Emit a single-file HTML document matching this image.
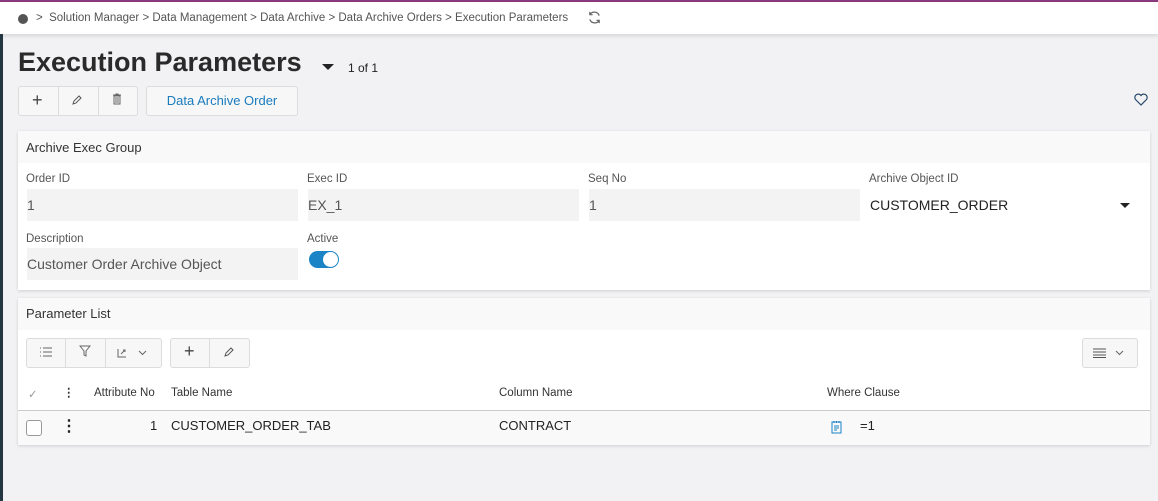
<!DOCTYPE html>
<html><head><meta charset="utf-8">
<style>
*{box-sizing:border-box;margin:0;padding:0}
body{width:1158px;height:501px;overflow:hidden;background:#f2f1f3;font-family:"Liberation Sans",sans-serif;color:#222;position:relative;font-size:12px}
.abs{position:absolute}
.topline{left:0;top:0;width:1158px;height:2px;background:#8a3a7e}
.crumb{left:0;top:2px;width:1158px;height:32px;background:#fff;box-shadow:0 2px 4px rgba(0,0,0,.12)}
.leftbar{left:0;top:34px;width:3px;height:467px;background:#243642}
.btn{background:#f7f7f7;border:1px solid #dcdcdc;border-radius:3px}
.card{background:#fff;box-shadow:0 1px 3px rgba(0,0,0,.15)}
.lbl{font-size:11.5px;color:#555}
.fld{background:#f3f3f3;font-size:14px;color:#555;padding:8px 0;height:32px}
.th{font-size:11.5px;color:#333}
</style></head><body>
<div class="abs topline"></div>
<div class="abs crumb">
 <div class="abs" style="left:18px;top:12px;width:10px;height:10px;border-radius:50%;background:#555"></div>
 <div class="abs" style="left:36px;top:10px;font-size:11.5px;color:#555">&gt;&nbsp; Solution Manager &gt; Data Management &gt; Data Archive &gt; Data Archive Orders &gt; Execution Parameters</div>
 <svg class="abs" style="left:587px;top:8px" width="15" height="15" viewBox="0 0 16 16" fill="none" stroke="#666" stroke-width="1.3"><path d="M13 6A5.5 5.5 0 0 0 3 5M3 2v3h3M3 10a5.5 5.5 0 0 0 10 1M13 14v-3h-3"/></svg>
</div>
<div class="abs leftbar"></div>
<div class="abs" style="left:18px;top:47px;font-size:27px;font-weight:bold;color:#2a2a2a">Execution Parameters</div>
<div class="abs" style="left:322px;top:64px;width:0;height:0;border-left:6px solid transparent;border-right:6px solid transparent;border-top:6px solid #222"></div>
<div class="abs" style="left:348px;top:61px;font-size:12px">1 of 1</div>
<div class="abs btn" style="left:18px;top:86px;width:120px;height:30px"></div>
<div class="abs" style="left:58px;top:87px;width:1px;height:28px;background:#dcdcdc"></div>
<div class="abs" style="left:98px;top:87px;width:1px;height:28px;background:#dcdcdc"></div>
<div class="abs" style="left:32px;top:90px;font-size:18px;color:#444">+</div>
<svg class="abs" style="left:71px;top:94px" width="12" height="12" viewBox="0 0 12 12"><path d="M2 10l1-3 5-5 2 2-5 5z" fill="none" stroke="#555"/></svg>
<svg class="abs" style="left:112px;top:93px" width="10" height="12" viewBox="0 0 10 12"><path d="M1 2h8M3.5 1h3M2 3h6v8H2zM4 4v6M6 4v6" fill="none" stroke="#666"/></svg>
<div class="abs btn" style="left:146px;top:86px;width:152px;height:30px;font-size:13px;color:#1a7bbd;text-align:center;line-height:28px">Data Archive Order</div>
<svg class="abs" style="left:1134px;top:93px" width="14" height="13" viewBox="0 0 14 13"><path d="M7 12L1.5 6.5A3 3 0 0 1 7 2.5 3 3 0 0 1 12.5 6.5z" fill="none" stroke="#2a4a6a" stroke-width="1.2"/></svg>

<div class="abs card" style="left:18px;top:131px;width:1132px;height:159px">
 <div style="height:32px;background:#f9f9f9;padding:9px 8px;font-size:13px;color:#333">Archive Exec Group</div>
 <div class="abs lbl" style="left:8px;top:42px">Order ID</div>
 <div class="abs fld" style="left:9px;top:58px;width:271px">1</div>
 <div class="abs lbl" style="left:289px;top:42px">Exec ID</div>
 <div class="abs fld" style="left:290px;top:58px;width:271px">EX_1</div>
 <div class="abs lbl" style="left:570px;top:42px">Seq No</div>
 <div class="abs fld" style="left:571px;top:58px;width:271px">1</div>
 <div class="abs lbl" style="left:851px;top:42px">Archive Object ID</div>
 <div class="abs" style="left:852px;top:66px;font-size:14px;color:#222">CUSTOMER_ORDER</div>
 <div class="abs" style="left:1102px;top:72px;width:0;height:0;border-left:5px solid transparent;border-right:5px solid transparent;border-top:5px solid #222"></div>
 <div class="abs lbl" style="left:8px;top:102px">Description</div>
 <div class="abs fld" style="left:9px;top:117px;width:271px">Customer Order Archive Object</div>
 <div class="abs lbl" style="left:289px;top:102px">Active</div>
 <div class="abs" style="left:291px;top:120px;width:30px;height:17px;border-radius:9px;background:#1a84c7"></div>
 <div class="abs" style="left:305px;top:121px;width:15px;height:15px;border-radius:50%;background:#fff"></div>
</div>

<div class="abs card" style="left:18px;top:298px;width:1132px;height:147px">
 <div style="height:32px;background:#f9f9f9;padding:8px 8px;font-size:13px;color:#333">Parameter List</div>
 <div class="abs btn" style="left:8px;top:40px;width:136px;height:30px"></div>
 <div class="abs" style="left:47px;top:41px;width:1px;height:28px;background:#dcdcdc"></div>
 <div class="abs" style="left:87px;top:41px;width:1px;height:28px;background:#dcdcdc"></div>
 <svg class="abs" style="left:22px;top:49px" width="12" height="10" viewBox="0 0 12 10"><path d="M0 1h1M0 5h1M0 9h1M3 1h9M3 5h9M3 9h9" stroke="#666"/></svg>
 <svg class="abs" style="left:61px;top:47px" width="12" height="12" viewBox="0 0 12 12"><path d="M1 1h10L7 6v5L5 10V6z" fill="none" stroke="#666"/></svg>
 <svg class="abs" style="left:99px;top:49px" width="12" height="11" viewBox="0 0 12 11"><path d="M1 2v8h8M4 7l4-4M6 3h2v2" fill="none" stroke="#666"/></svg>
 <svg class="abs" style="left:120px;top:52px" width="9" height="6" viewBox="0 0 9 6"><path d="M1 1l3.5 3.5L8 1" fill="none" stroke="#666"/></svg>
 <div class="abs btn" style="left:152px;top:40px;width:80px;height:30px"></div>
 <div class="abs" style="left:191px;top:41px;width:1px;height:28px;background:#dcdcdc"></div>
 <div class="abs" style="left:166px;top:43px;font-size:18px;color:#444">+</div>
 <svg class="abs" style="left:205px;top:48px" width="12" height="12" viewBox="0 0 12 12"><path d="M2 10l1-3 5-5 2 2-5 5z" fill="none" stroke="#555"/></svg>
 <div class="abs btn" style="left:1064px;top:40px;width:56px;height:30px"></div>
 <svg class="abs" style="left:1075px;top:50px" width="13" height="10" viewBox="0 0 13 10"><path d="M0 1h13M0 4h13M0 7h13M0 9.5h13" stroke="#555"/></svg>
 <svg class="abs" style="left:1097px;top:52px" width="9" height="6" viewBox="0 0 9 6"><path d="M1 1l3.5 3.5L8 1" fill="none" stroke="#666"/></svg>
 <div class="abs th" style="left:10px;top:89px;color:#999">✓</div>
 <div class="abs th" style="left:45px;top:87px;font-weight:bold">⋮</div>
 <div class="abs th" style="left:76px;top:89px">Attribute No</div>
 <div class="abs th" style="left:153px;top:89px">Table Name</div>
 <div class="abs th" style="left:481px;top:89px">Column Name</div>
 <div class="abs th" style="left:809px;top:89px">Where Clause</div>
 <div class="abs" style="left:0;top:112px;width:1132px;height:1px;background:#ccc"></div>
 <div class="abs" style="left:0;top:113px;width:1132px;height:34px;background:#f9f9f9"></div>
 <div class="abs" style="left:8px;top:122px;width:16px;height:16px;border:1px solid #999;border-radius:3px;background:#fff"></div>
 <div class="abs" style="left:43px;top:118px;font-size:16px;font-weight:bold">⋮</div>
 <div class="abs" style="left:132px;top:120px;font-size:13px">1</div>
 <div class="abs" style="left:153px;top:120px;font-size:13px">CUSTOMER_ORDER_TAB</div>
 <div class="abs" style="left:481px;top:120px;font-size:13px">CONTRACT</div>
 <svg class="abs" style="left:813px;top:122px" width="11" height="14" viewBox="0 0 11 14"><path d="M1 2h9v11H1zM3 1v2M5.5 1v2M8 1v2M3 6h5M3 8h5M3 10h3" fill="none" stroke="#1a84c7"/></svg>
 <div class="abs" style="left:842px;top:120px;font-size:13px">=1</div>
</div>
</body></html>
